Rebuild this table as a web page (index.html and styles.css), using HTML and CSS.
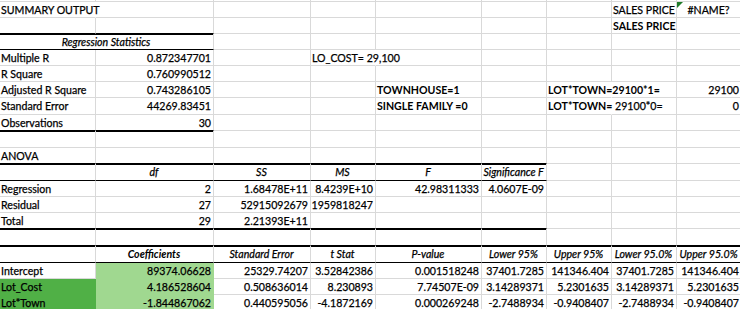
FILE: index.html
```html
<!DOCTYPE html>
<html>
<head>
<meta charset="utf-8">
<link rel="stylesheet" href="styles.css">
</head>
<body>
<div class="sheet">
  <div class="row z">
    <div class="c"></div><div class="c"></div><div class="c"></div><div class="c"></div><div class="c"></div><div class="c"></div><div class="c"></div><div class="c"></div><div class="c"></div>
  </div>
  <div class="row">
    <div class="c nr">SUMMARY OUTPUT</div><div class="c"></div><div class="c"></div><div class="c"></div><div class="c"></div><div class="c"></div><div class="c"></div><div class="c">SALES PRICE</div><div class="c m"><span class="tri"></span>#NAME?</div>
  </div>
  <div class="row">
    <div class="c tb"></div><div class="c tb"></div><div class="c"></div><div class="c"></div><div class="c"></div><div class="c"></div><div class="c"></div><div class="c b">SALES PRICE</div><div class="c"></div>
  </div>
  <div class="row">
    <div class="c s2 m i tt hb">Regression Statistics</div><div class="c"></div><div class="c"></div><div class="c"></div><div class="c"></div><div class="c"></div><div class="c"></div><div class="c"></div>
  </div>
  <div class="row">
    <div class="c">Multiple R</div><div class="c r">0.872347701</div><div class="c"></div><div class="c nr">LO_COST= 29,100</div><div class="c"></div><div class="c"></div><div class="c"></div><div class="c"></div><div class="c"></div>
  </div>
  <div class="row">
    <div class="c">R Square</div><div class="c r">0.760990512</div><div class="c"></div><div class="c"></div><div class="c"></div><div class="c"></div><div class="c"></div><div class="c"></div><div class="c"></div>
  </div>
  <div class="row">
    <div class="c">Adjusted R Square</div><div class="c r">0.743286105</div><div class="c"></div><div class="c"></div><div class="c b">TOWNHOUSE=1</div><div class="c"></div><div class="c b nr">LOT*TOWN=29100*1=</div><div class="c"></div><div class="c r">29100</div>
  </div>
  <div class="row t">
    <div class="c">Standard Error</div><div class="c r">44269.83451</div><div class="c"></div><div class="c"></div><div class="c b">SINGLE FAMILY =0</div><div class="c"></div><div class="c nr"><span class="b">LOT*TOWN=</span>&nbsp;29100*0=</div><div class="c"></div><div class="c r">0</div>
  </div>
  <div class="row">
    <div class="c tb">Observations</div><div class="c r tb">30</div><div class="c"></div><div class="c"></div><div class="c"></div><div class="c"></div><div class="c"></div><div class="c"></div><div class="c"></div>
  </div>
  <div class="row t">
    <div class="c tt"></div><div class="c tt"></div><div class="c"></div><div class="c"></div><div class="c"></div><div class="c"></div><div class="c"></div><div class="c"></div><div class="c"></div>
  </div>
  <div class="row">
    <div class="c tb">ANOVA</div><div class="c tb"></div><div class="c tb"></div><div class="c tb"></div><div class="c tb"></div><div class="c tb"></div><div class="c"></div><div class="c"></div><div class="c"></div>
  </div>
  <div class="row t">
    <div class="c tt hb"></div><div class="c m i tt hb">df</div><div class="c m i tt hb">SS</div><div class="c m i tt hb">MS</div><div class="c m i tt hb">F</div><div class="c m i tt hb">Significance F</div><div class="c"></div><div class="c"></div><div class="c"></div>
  </div>
  <div class="row">
    <div class="c">Regression</div><div class="c r">2</div><div class="c r">1.68478E+11</div><div class="c r">8.4239E+10</div><div class="c r">42.98311333</div><div class="c r">4.0607E-09</div><div class="c"></div><div class="c"></div><div class="c"></div>
  </div>
  <div class="row">
    <div class="c">Residual</div><div class="c r">27</div><div class="c r">52915092679</div><div class="c r">1959818247</div><div class="c"></div><div class="c"></div><div class="c"></div><div class="c"></div><div class="c"></div>
  </div>
  <div class="row">
    <div class="c tb">Total</div><div class="c r tb">29</div><div class="c r tb">2.21393E+11</div><div class="c tb"></div><div class="c tb"></div><div class="c tb"></div><div class="c"></div><div class="c"></div><div class="c"></div>
  </div>
  <div class="row t">
    <div class="c tt tb"></div><div class="c tt tb"></div><div class="c tt tb"></div><div class="c tt tb"></div><div class="c tt tb"></div><div class="c tt tb"></div><div class="c tb"></div><div class="c tb"></div><div class="c tb"></div>
  </div>
  <div class="row t">
    <div class="c tt hb"></div><div class="c m i b tt hb">Coefficients</div><div class="c m i tt hb">Standard Error</div><div class="c m i tt hb">t Stat</div><div class="c m i tt hb">P-value</div><div class="c m i tt hb">Lower 95%</div><div class="c m i tt hb">Upper 95%</div><div class="c m i tt hb">Lower 95.0%</div><div class="c m i tt hb">Upper 95.0%</div>
  </div>
  <div class="row">
    <div class="c">Intercept</div><div class="c r lg">89374.06628</div><div class="c r">25329.74207</div><div class="c r">3.52842386</div><div class="c r">0.001518248</div><div class="c r">37401.7285</div><div class="c r">141346.404</div><div class="c r">37401.7285</div><div class="c r">141346.404</div>
  </div>
  <div class="row">
    <div class="c dg">Lot_Cost</div><div class="c r lg">4.186528604</div><div class="c r">0.508636014</div><div class="c r">8.230893</div><div class="c r">7.74507E-09</div><div class="c r">3.14289371</div><div class="c r">5.2301635</div><div class="c r">3.14289371</div><div class="c r">5.2301635</div>
  </div>
  <div class="row">
    <div class="c dg">Lot*Town</div><div class="c r lg">-1.844867062</div><div class="c r">0.440595056</div><div class="c r">-4.1872169</div><div class="c r">0.000269248</div><div class="c r">-2.7488934</div><div class="c r">-0.9408407</div><div class="c r">-2.7488934</div><div class="c r">-0.9408407</div>
  </div>
</div>
</body>
</html>
```
FILE: styles.css
```css
html, body {
  margin: 0;
  padding: 0;
  background: #ffffff;
  overflow: hidden;
}

body {
  font-family: Lato, "Open Sans", sans-serif;
  font-size: 10.6px;
  color: #000000;
  -webkit-text-stroke: 0.25px #000000;
}

.sheet {
  width: 742px;
}

.row {
  display: grid;
  grid-template-columns: 96px 118px 97px 65px 106px 65px 65px 65px 65px;
  height: 16px;
}

.row.t {
  height: 17px;
}

.row.z {
  height: 2px;
}

.c {
  box-sizing: border-box;
  min-width: 0;
  position: relative;
  display: flex;
  align-items: center;
  padding: 1px 2px 0 1px;
  border-right: 1px solid #d9d9d9;
  border-bottom: 1px solid #d9d9d9;
  white-space: nowrap;
  line-height: 1;
}

.r {
  justify-content: flex-end;
}

.m {
  justify-content: center;
}

.i {
  font-style: italic;
}

.b {
  font-weight: bold;
  -webkit-text-stroke: 0;
}

.s2 {
  grid-column: span 2;
}

.tb,
.hb {
  border-bottom-color: #000000;
}

.tt {
  box-shadow: inset 0 1px 0 #000000;
}

.nr {
  border-right-color: transparent;
}

.lg {
  background: #a0d890;
  border-color: #a0d890;
}

.dg {
  background: #50b046;
  border-color: #50b046;
}

.tri {
  position: absolute;
  left: 0;
  top: 0;
  width: 0;
  height: 0;
  border-top: 6px solid #1f7d2a;
  border-right: 6px solid transparent;
}
```
